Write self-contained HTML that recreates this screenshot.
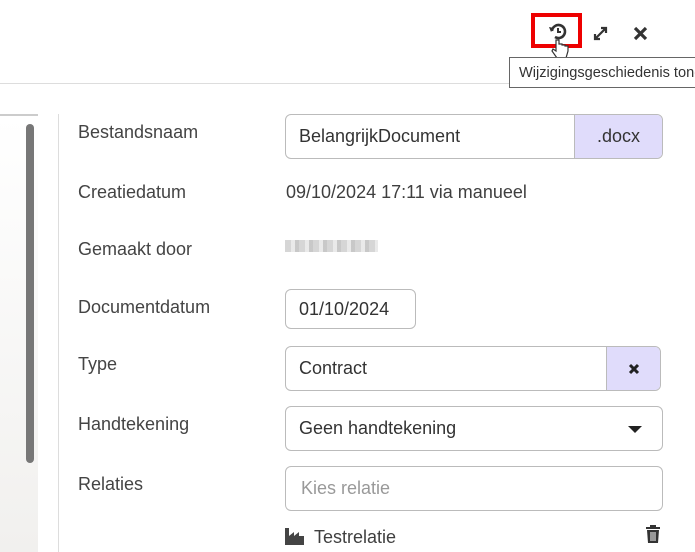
<!DOCTYPE html>
<html><head><style>
*{box-sizing:border-box;margin:0;padding:0}
body{width:695px;height:552px;overflow:hidden;background:#fff;font-family:"Liberation Sans",Arial,sans-serif;color:#3f3f3f;position:relative;font-size:18px}
.a{position:absolute}
.lbl{position:absolute;left:78px;font-size:18px;color:#444}
.inp{position:absolute;border:1px solid #bbb;border-radius:6px;background:#fff;display:flex;align-items:center;padding-left:13px;font-size:18px;color:#333;overflow:hidden}
.add{position:absolute;top:0;bottom:0;right:0;background:#e0dcfb;border-left:1px solid #bbb;display:flex;align-items:center;justify-content:center}
</style></head><body>
<div class="a" style="left:0;top:83px;width:695px;height:1px;background:#ddd"></div>
<div class="a" style="left:0;top:114px;width:38px;height:438px;background:linear-gradient(#fff,#f1f0ee);border-top:2px solid #ccc"></div>
<div class="a" style="left:26px;top:124px;width:8px;height:339px;background:#777;border-radius:4px"></div>
<div class="a" style="left:58px;top:114px;width:1px;height:438px;background:#ddd"></div>

<div class="a" style="left:531px;top:13px;width:51px;height:35px;border:4px solid #e00"></div>
<svg class="a" style="left:548px;top:22px" width="20" height="20" viewBox="0 0 20 20"><path d="M4 9A6.5 6.5 0 1 1 7 15" fill="none" stroke="#333" stroke-width="2.6"/><path d="M1 5l5 1-3 4z" fill="#333"/><path d="M10 6v4h3" fill="none" stroke="#333" stroke-width="2"/></svg>
<svg class="a" style="left:592px;top:25px" width="17" height="17" viewBox="0 0 17 17"><path d="M3 14L14 3M9 3h5v5M3 9v5h5" fill="none" stroke="#333" stroke-width="2.2"/></svg>
<svg class="a" style="left:633px;top:26px" width="15" height="15" viewBox="0 0 15 15"><path d="M2 2L13 13M13 2L2 13" stroke="#333" stroke-width="3.2"/></svg>
<svg class="a" style="left:550px;top:38px" width="20" height="24" viewBox="0 0 20 24"><path d="M6 2v11l-3-2-1 2 5 7h9l2-7v-5h-3v-1h-3v-1h-3V2z" fill="#fff" stroke="#333" stroke-width="1.2"/></svg>
<div class="a" style="left:509px;top:57px;width:200px;height:31px;border:1px solid #666;background:#fff;font-size:14.6px;color:#333;padding:7px 0 0 9px;white-space:nowrap">Wijzigingsgeschiedenis tonen</div>

<div class="lbl" style="top:122px">Bestandsnaam</div>
<div class="inp" style="left:285px;top:114px;width:378px;height:45px">BelangrijkDocument<div class="add" style="width:88px">.docx</div></div>
<div class="lbl" style="top:182px">Creatiedatum</div>
<div class="a" style="left:286px;top:182px">09/10/2024 17:11 via manueel</div>
<div class="lbl" style="top:239px">Gemaakt door</div>
<div class="a" style="left:285px;top:240px;width:93px;height:12px;background:repeating-linear-gradient(90deg,#ccc 0 6px,#e4e4e4 6px 10px,#bbb 10px 14px);opacity:.8"></div>
<div class="lbl" style="top:297px">Documentdatum</div>
<div class="inp" style="left:285px;top:289px;width:131px;height:40px">01/10/2024</div>
<div class="lbl" style="top:354px">Type</div>
<div class="inp" style="left:285px;top:346px;width:376px;height:45px">Contract<div class="add" style="width:54px"><svg width="12" height="12" viewBox="0 0 12 12"><path d="M2 2l8 8M10 2l-8 8" stroke="#222" stroke-width="3"/></svg></div></div>
<div class="lbl" style="top:414px">Handtekening</div>
<div class="inp" style="left:285px;top:406px;width:378px;height:45px">Geen handtekening<svg class="a" style="right:20px;top:19px" width="14" height="8"><path d="M0 0h14L7 7z" fill="#222"/></svg></div>
<div class="lbl" style="top:474px">Relaties</div>
<div class="inp" style="left:285px;top:466px;width:378px;height:45px;color:#999;padding-left:15px">Kies relatie</div>
<svg class="a" style="left:285px;top:528px" width="19" height="17" viewBox="0 0 19 17"><path d="M0 0h4v8l5-4v4l5-4v4h5v9H0z" fill="#444"/></svg>
<div class="a" style="left:314px;top:527px">Testrelatie</div>
<svg class="a" style="left:645px;top:524px" width="16" height="20" viewBox="0 0 16 20"><path d="M1 3h14v2H1zM5 1h6v2H5z" fill="#333"/><path d="M2 6h12l-1 13H3z" fill="#333"/><path d="M6 8v9M8 8v9M10 8v9" stroke="#fff" stroke-width="1"/></svg>
</body></html>
